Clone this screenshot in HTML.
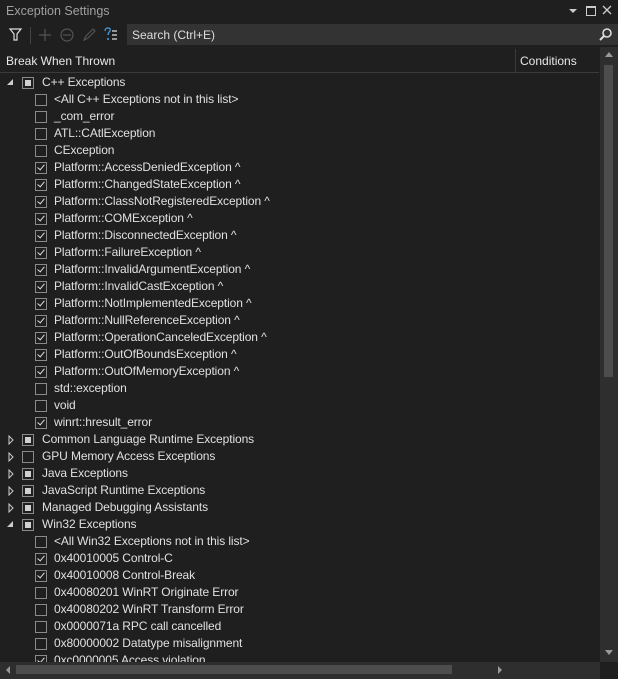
<!DOCTYPE html><html><head><style>
body{margin:0;width:618px;height:679px;background:#1f1f1f;font-family:"Liberation Sans",sans-serif;font-size:12px;color:#e0e0e0;overflow:hidden;position:relative}
.a{position:absolute}
.row{position:absolute;height:17px;line-height:17px;white-space:nowrap;letter-spacing:-0.1px}
.cb{position:absolute;width:10px;height:10px;border:1px solid #8a8a8a;top:3px;box-sizing:content-box}
.cb.f::after{content:"";position:absolute;left:2px;top:2px;width:6px;height:6px;background:#d0d0d0}
.cb.k::after{content:"";position:absolute;left:3px;top:0px;width:3px;height:6px;border-right:1.5px solid #e0e0e0;border-bottom:1.5px solid #e0e0e0;transform:rotate(40deg)}
</style></head><body>
<div class="a" style="left:6px;top:4px;color:#a0a0a0;font-size:12.5px">Exception Settings</div>
<div class="a" style="left:569px;top:9px;width:0;height:0;border-left:4px solid transparent;border-right:4px solid transparent;border-top:4px solid #ccc"></div>
<div class="a" style="left:586px;top:6px;width:8px;height:7px;border:1px solid #ccc;border-top-width:2px"></div>
<svg class="a" style="left:602px;top:5px" width="10" height="10"><path d="M1 1L9 9M9 1L1 9" stroke="#ccc" stroke-width="1.3"/></svg>
<svg class="a" style="left:8px;top:27px" width="16" height="16"><path d="M2 2H13L9 7V13H6V7Z" fill="none" stroke="#ddd" stroke-width="1.2"/></svg>
<div class="a" style="left:30px;top:27px;width:1px;height:17px;background:#444"></div>
<svg class="a" style="left:37px;top:27px" width="80" height="16"><path d="M8 2V14M2 8H14" stroke="#555" stroke-width="1.2"/><circle cx="30" cy="8" r="6" fill="none" stroke="#555" stroke-width="1.2"/><path d="M26 8H34" stroke="#555" stroke-width="1.2"/><path d="M47 13L49 9L56 2L58 4L51 11Z" fill="none" stroke="#555" stroke-width="1.1"/><path d="M68 4Q68 1 71 1Q74 1 73 4Q71 6 71 8" fill="none" stroke="#4aa0e6" stroke-width="1.2"/><circle cx="71" cy="12" r="1" fill="#4aa0e6"/><path d="M75 4H82M75 8H82M75 12H82" stroke="#ddd" stroke-width="1.2"/></svg>
<div class="a" style="left:127px;top:24px;width:491px;height:21px;background:#333"></div>
<div class="a" style="left:132px;top:28px;color:#ddd">Search (Ctrl+E)</div>
<svg class="a" style="left:598px;top:27px" width="16" height="16"><circle cx="9" cy="6" r="4" fill="none" stroke="#ddd" stroke-width="1.6"/><path d="M6 9L2 13" stroke="#ddd" stroke-width="2"/></svg>
<div class="a" style="left:6px;top:54px;color:#e8e8e8">Break When Thrown</div>
<div class="a" style="left:515px;top:49px;width:1px;height:23px;background:#3a3a3a"></div>
<div class="a" style="left:520px;top:54px;color:#e8e8e8">Conditions</div>
<div class="a" style="left:0;top:72px;width:599px;height:1px;background:#3a3a3a"></div>
<div class="a" style="left:600px;top:47px;width:18px;height:615px;background:#2e2e2e"></div>
<div class="a" style="left:604px;top:65px;width:9px;height:312px;background:#4d4d4d"></div>
<div class="a" style="left:605px;top:52px;width:0;height:0;border-left:4px solid transparent;border-right:4px solid transparent;border-bottom:5px solid #999"></div>
<div class="a" style="left:605px;top:650px;width:0;height:0;border-left:4px solid transparent;border-right:4px solid transparent;border-top:5px solid #999"></div>
<div class="a" style="left:0;top:662px;width:600px;height:17px;background:#2e2e2e"></div>
<div class="a" style="left:16px;top:665px;width:436px;height:9px;background:#4d4d4d"></div>
<div class="a" style="left:6px;top:666px;width:0;height:0;border-top:4px solid transparent;border-bottom:4px solid transparent;border-right:4px solid #999"></div>
<div class="a" style="left:498px;top:666px;width:0;height:0;border-top:4px solid transparent;border-bottom:4px solid transparent;border-left:4px solid #999"></div>
<div class="a" style="left:0;top:74px;width:600px;height:588px;overflow:hidden">
<div id="list"></div>
</div>
<script>
var rows=[
["g","e","f","C++ Exceptions"],
["c","","","<All C++ Exceptions not in this list>"],
["c","","","_com_error"],["c","","","ATL::CAtlException"],["c","","","CException"],
["c","","k","Platform::AccessDeniedException ^"],["c","","k","Platform::ChangedStateException ^"],["c","","k","Platform::ClassNotRegisteredException ^"],["c","","k","Platform::COMException ^"],["c","","k","Platform::DisconnectedException ^"],["c","","k","Platform::FailureException ^"],["c","","k","Platform::InvalidArgumentException ^"],["c","","k","Platform::InvalidCastException ^"],["c","","k","Platform::NotImplementedException ^"],["c","","k","Platform::NullReferenceException ^"],["c","","k","Platform::OperationCanceledException ^"],["c","","k","Platform::OutOfBoundsException ^"],["c","","k","Platform::OutOfMemoryException ^"],
["c","","","std::exception"],["c","","","void"],["c","","k","winrt::hresult_error"],
["g","c","f","Common Language Runtime Exceptions"],["g","c","","GPU Memory Access Exceptions"],["g","c","f","Java Exceptions"],["g","c","f","JavaScript Runtime Exceptions"],["g","c","f","Managed Debugging Assistants"],["g","e","f","Win32 Exceptions"],
["c","","","<All Win32 Exceptions not in this list>"],["c","","k","0x40010005 Control-C"],["c","","k","0x40010008 Control-Break"],["c","","","0x40080201 WinRT Originate Error"],["c","","","0x40080202 WinRT Transform Error"],["c","","","0x0000071a RPC call cancelled"],["c","","","0x80000002 Datatype misalignment"],["c","","k","0xc0000005 Access violation"]];
var h="";rows.forEach(function(r,i){var t=i*17,g=r[0]=="g";var cbx=g?22:35,tx=g?42:54;
h+='<div class="row" style="top:'+t+'px;left:0;width:600px">';
if(g){h+=r[1]=="e"?'<svg style="position:absolute;left:7px;top:5px" width="7" height="7"><path d="M6 0V6H0Z" fill="#ccc"/></svg>':'<svg style="position:absolute;left:8px;top:4px" width="7" height="10"><path d="M1 1L5 5L1 9Z" fill="none" stroke="#ccc"/></svg>';}
h+='<div class="cb '+r[2]+'" style="left:'+cbx+'px"></div><span style="position:absolute;left:'+tx+'px">'+r[3].replace(/</g,"&lt;").replace(/>/g,"&gt;")+'</span></div>';});
document.getElementById("list").innerHTML=h;
</script>
</body></html>
